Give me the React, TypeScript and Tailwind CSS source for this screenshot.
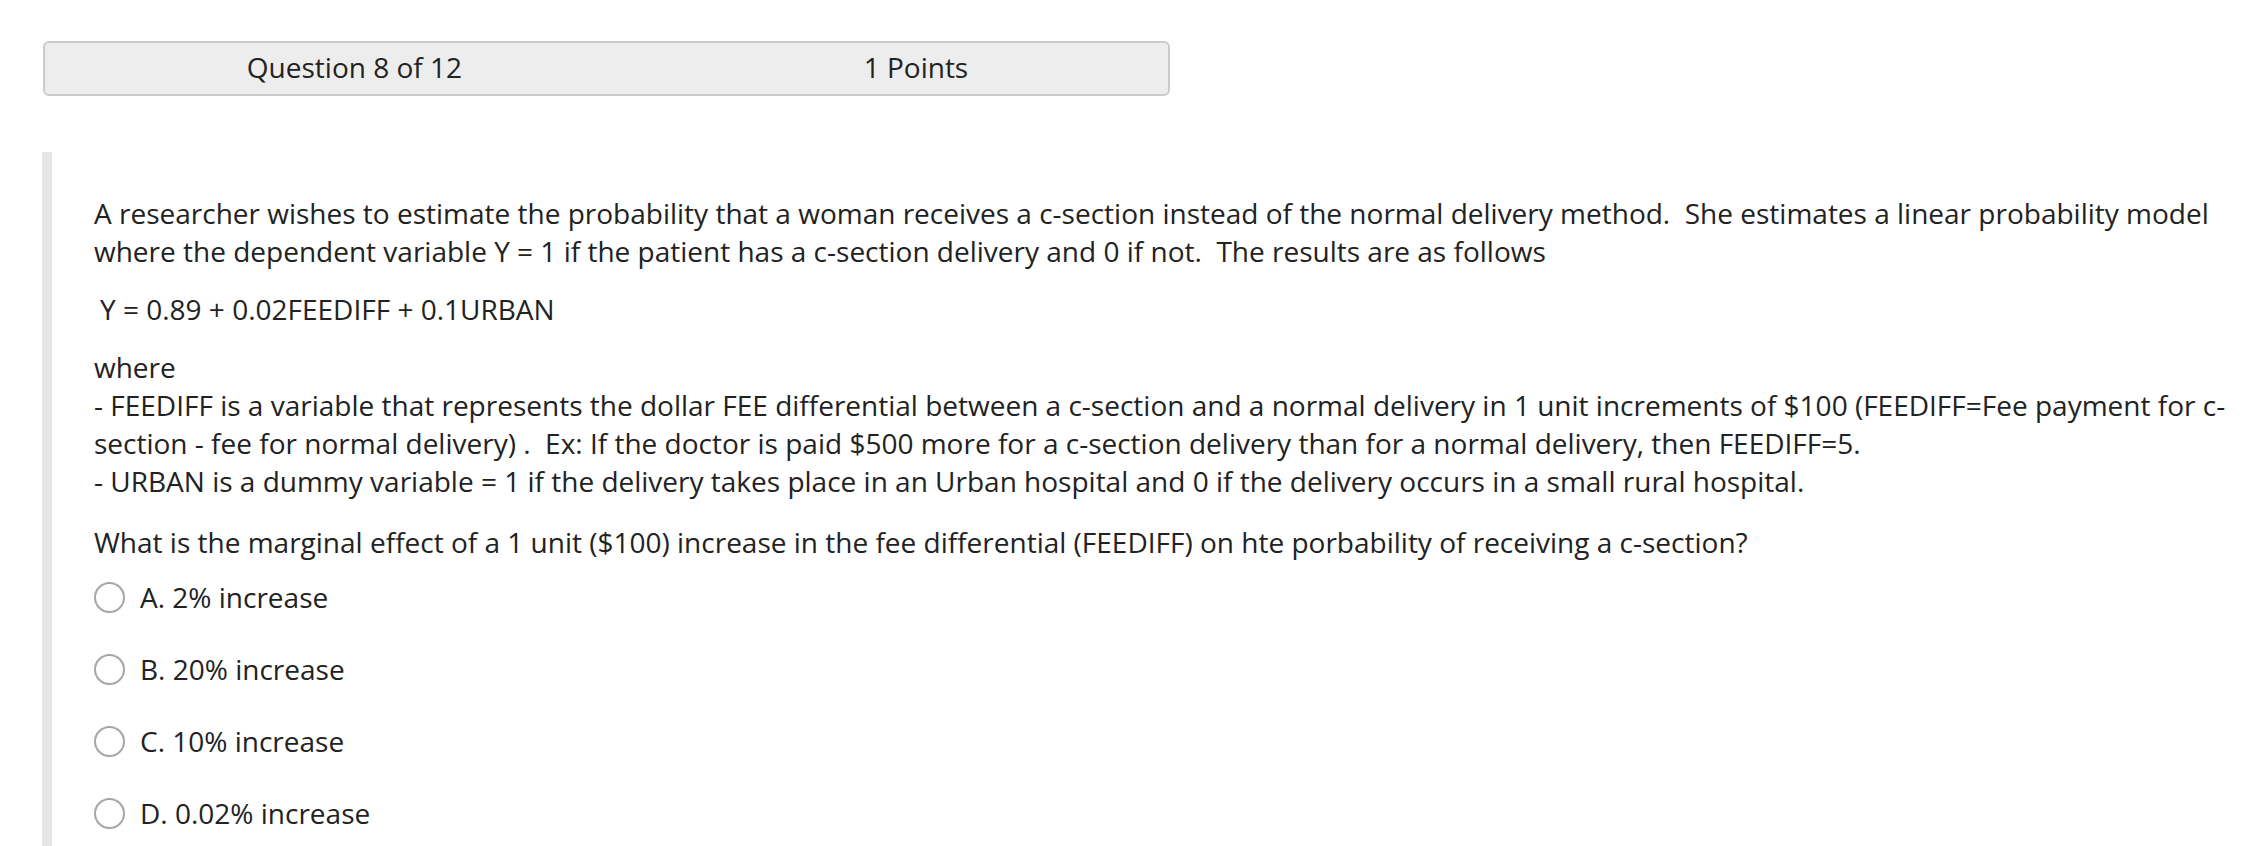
import React from 'react';

const options = ['A. 2% increase', 'B. 20% increase', 'C. 10% increase', 'D. 0.02% increase'];

const App: React.FC = () => {
  return (
    <div className="min-h-screen bg-white text-[#222] font-['Open_Sans',sans-serif]">
      {/* Question header */}
      <div className="pt-[41px] pl-[43px]">
        <div className="flex w-[1127px] h-[55px] items-center pb-[3px] rounded-[6px] border-2 border-[#cbcbcb] bg-[#ededed] text-[28px]">
          <div className="w-[620px] text-center">Question 8 of 12</div>
          <div className="w-[505px] text-center">1 Points</div>
        </div>
      </div>

      {/* Question body */}
      <div className="mt-[56px] ml-[42px] border-l-[10px] border-[#e6e6e6] pl-[42px] pt-[42px] pr-[20px] text-[28px] leading-[38px]">
        <p>
          A researcher wishes to estimate the probability that a woman receives a c-section instead of the normal delivery method.&nbsp; She estimates a linear probability model where the dependent variable Y = 1 if the patient has a c-section delivery and 0 if not.&nbsp; The results are as follows
        </p>
        <p className="mt-[20px] pl-[6px]">Y = 0.89 + 0.02FEEDIFF + 0.1URBAN</p>
        <p className="mt-[20px]">where</p>
        <p>
          - FEEDIFF is a variable that represents the dollar FEE differential between a c-section and a normal delivery in 1 unit increments of $100 (FEEDIFF=Fee payment for c-section - fee for normal delivery) .&nbsp; Ex: If the doctor is paid $500 more for a c-section delivery than for a normal delivery, then FEEDIFF=5.
        </p>
        <p>- URBAN is a dummy variable = 1 if the delivery takes place in an Urban hospital and 0 if the delivery occurs in a small rural hospital.</p>
        <p className="mt-[23px]">
          What is the marginal effect of a 1 unit ($100) increase in the fee differential (FEEDIFF) on hte porbability of receiving a c-section?
        </p>
        <div className="mt-[17px] flex flex-col gap-[34px] pb-[14px]">
          {options.map((o) => (
            <label key={o} className="flex items-center gap-[15px] text-[28px]">
              <span className="w-[31px] h-[31px] rounded-full border-2 border-[#a6a6a6] bg-white shrink-0" />
              <span>{o}</span>
            </label>
          ))}
        </div>
      </div>
    </div>
  );
};

export default App;
